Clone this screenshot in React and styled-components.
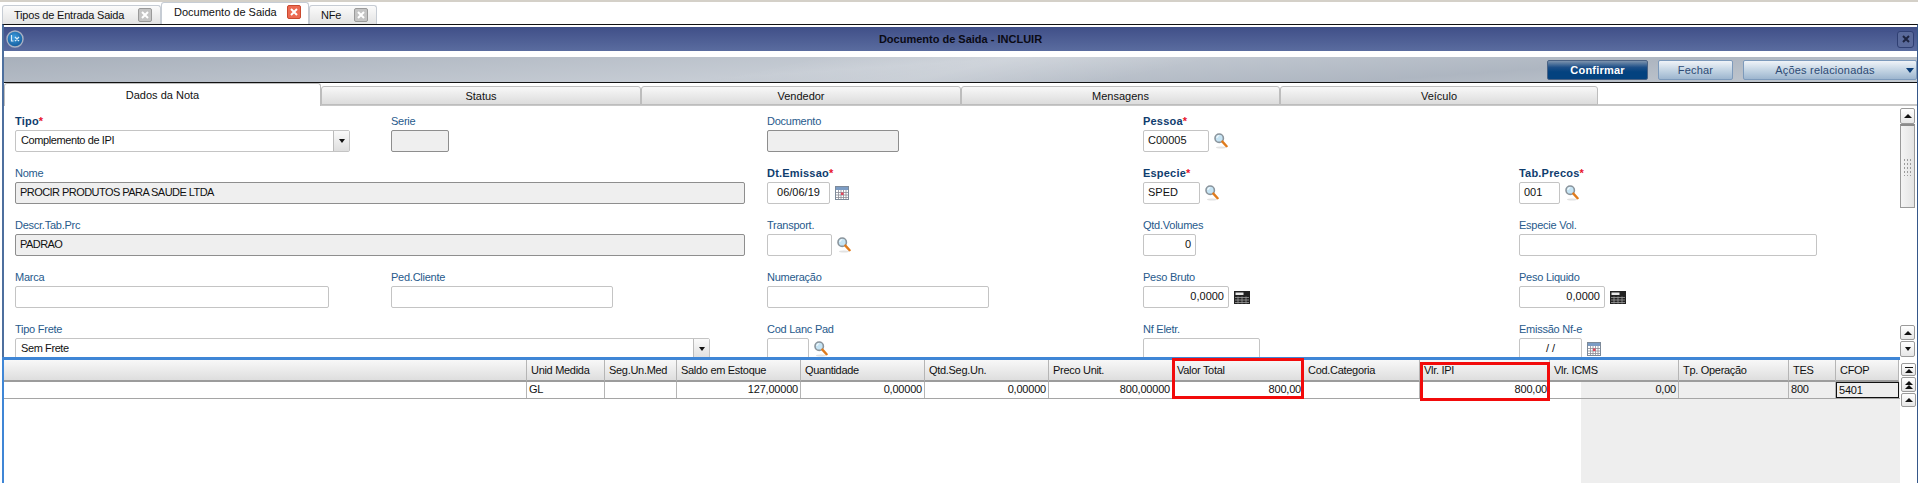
import React from 'react';
import styled, { createGlobalStyle } from 'styled-components';

const GlobalStyle = createGlobalStyle`
  html, body { margin: 0; padding: 0; background: #fff; }
  body { font-family: "Liberation Sans", Arial, sans-serif; font-size: 11px; color: #111; }
`;

const Page = styled.div`
  width: 1918px;
  height: 483px;
  overflow: hidden;
  position: relative;
  background: #fff;
`;

const TopEdge = styled.div`
  height: 2px;
  background: #d4d0c8;
`;

/* aba superior */
const DocTabs = styled.div`
  display: flex;
  align-items: flex-end;
  height: 22px;
  padding-left: 2px;
`;

const DocTab = styled.div`
  box-sizing: border-box;
  width: ${(p) => p.$w}px;
  height: ${(p) => (p.$active ? 22 : 19)}px;
  display: flex;
  align-items: center;
  justify-content: space-between;
  padding: ${(p) => (p.$active ? '0 7px 3px 12px' : '0 8px 0 11px')};
  font-size: 11px;
  letter-spacing: ${(p) => (p.$active ? '0' : '-0.2px')};
  color: #111;
  border: 1px solid #c6ccd4;
  border-bottom: none;
  border-radius: 3px 3px 0 0;
  background: ${(p) => (p.$active ? '#fff' : 'linear-gradient(#fbfbfb, #e3e3e3)')};
`;

const TabClose = styled.span`
  box-sizing: border-box;
  width: 14px;
  height: 14px;
  display: flex;
  align-items: center;
  justify-content: center;
  border: 1px solid ${(p) => (p.$active ? '#c9492f' : '#9a9a9a')};
  border-radius: 2px;
  background: ${(p) => (p.$active ? '#ec6a52' : '#c4c4c4')};
`;

const Window = styled.div`
  border-top: 1px solid #111;
  border-left: 2px solid #4d6f9e;
  margin-left: 2px;
  border-right: 1px solid #36588a;
`;

const TitleBar = styled.div`
  height: 24px;
  margin-top: 2px;
  display: flex;
  align-items: center;
  justify-content: space-between;
  padding: 0 3px 0 2px;
  background: linear-gradient(#404f88, #5a6c9f);
`;

const Logo = styled.span`
  width: 18px;
  height: 18px;
  display: block;
`;

const TitleText = styled.div`
  font-weight: bold;
  font-size: 11px;
  color: #0a0a14;
`;

const CloseButton = styled.span`
  box-sizing: border-box;
  width: 17px;
  height: 17px;
  display: flex;
  align-items: center;
  justify-content: center;
  border: 1px solid #2f3f72;
  border-radius: 3px;
  background: #5a6a9b;
`;

const Banner = styled.div`
  height: 25px;
  margin-top: 6px;
  border-bottom: 1px solid #111;
  display: flex;
  align-items: center;
  justify-content: flex-end;
  gap: 10px;
  background:
    linear-gradient(168deg, transparent 40%, rgba(255, 255, 255, 0.18) 50%, transparent 60%),
    linear-gradient(176deg, #a8b0bb 0%, #c6ccd4 45%, #aeb6c1 75%, #c5cbd2 100%);
`;

const ActionButton = styled.div`
  box-sizing: border-box;
  width: ${(p) => p.$w}px;
  height: 20px;
  padding-right: ${(p) => p.$pad || 0}px;
  position: relative;
  display: flex;
  align-items: center;
  justify-content: center;
  font-size: 11px;
  font-weight: ${(p) => (p.$primary ? 'bold' : 'normal')};
  letter-spacing: 0.2px;
  color: ${(p) => (p.$primary ? '#fff' : '#2d4a74')};
  border: 1px solid ${(p) => (p.$primary ? '#4a6284' : '#7d9abb')};
  border-radius: 2px;
  background: ${(p) =>
    p.$primary
      ? 'linear-gradient(#7d93ad 0%, #1d4f88 35%, #03427f 60%, #03427f 100%)'
      : 'linear-gradient(#f0f4f8 0%, #cddbe8 40%, #9db6cf 100%)'};
`;

const ActionArrow = styled.span`
  position: absolute;
  right: 2px;
  top: 7px;
  border-left: 4px solid transparent;
  border-right: 4px solid transparent;
  border-top: 5px solid #0d3f78;
`;

/* abas do formulario */
const FormTabs = styled.div`
  display: flex;
  align-items: flex-start;
  height: 23px;
  padding-left: 0;
  border-bottom: 2px solid #c8c8c8;
  box-sizing: border-box;
`;

const FormTab = styled.div`
  box-sizing: border-box;
  width: ${(p) => p.$w}px;
  height: ${(p) => (p.$active ? 23 : 19)}px;
  margin-top: ${(p) => (p.$active ? 0 : 3)}px;
  display: flex;
  align-items: center;
  justify-content: center;
  font-size: 11px;
  color: #111;
  border: 1px solid #bdbdbd;
  border-bottom: ${(p) => (p.$active ? 'none' : '1px solid #bdbdbd')};
  border-radius: 3px 3px 0 0;
  background: ${(p) => (p.$active ? '#fff' : 'linear-gradient(#f8f8f8, #dcdcdc)')};
  position: relative;
  z-index: ${(p) => (p.$active ? 1 : 0)};
`;

const FormArea = styled.div`
  height: 251px;
  display: flex;
  justify-content: space-between;
  overflow: hidden;
`;

const FormGrid = styled.div`
  display: grid;
  grid-template-columns: repeat(5, 376px);
  grid-auto-rows: 52px;
  padding: 9px 0 0 11px;
`;

const Field = styled.div`
  grid-column: span ${(p) => p.$span || 1};
  display: flex;
  flex-direction: column;
`;

const Label = styled.label`
  height: 15px;
  line-height: 13px;
  font-size: 11px;
  font-weight: ${(p) => (p.$required ? 'bold' : 'normal')};
  letter-spacing: ${(p) => (p.$required ? '0.2px' : '-0.25px')};
  color: ${(p) => (p.$required ? '#0f3d6e' : '#275a8c')};
`;

const Star = styled.span`
  color: #e8132c;
`;

const InputRow = styled.div`
  display: flex;
  align-items: center;
  gap: 5px;
  height: 22px;
`;

const Input = styled.div`
  box-sizing: border-box;
  width: ${(p) => p.$w}px;
  height: 22px;
  line-height: 18px;
  padding: 0 4px;
  font-size: 11px;
  letter-spacing: ${(p) => (p.$disabled ? '-0.55px' : '0')};
  color: #111;
  white-space: nowrap;
  overflow: hidden;
  text-align: ${(p) => p.$align || 'left'};
  border: 1px solid ${(p) => (p.$disabled ? '#8e8e8e' : '#c4c4c4')};
  border-radius: 2px;
  background: ${(p) => (p.$disabled ? '#efefef' : '#fff')};
`;

const Select = styled.div`
  box-sizing: border-box;
  width: ${(p) => p.$w}px;
  height: 22px;
  display: flex;
  justify-content: space-between;
  border: 1px solid #c4c4c4;
  border-radius: 2px;
  line-height: 19px;
  padding-left: 5px;
  font-size: 11px;
  letter-spacing: -0.4px;
`;

const SelectButton = styled.span`
  width: 15px;
  display: flex;
  align-items: center;
  justify-content: center;
  border-left: 1px solid #bbb;
  background: linear-gradient(#fafafa, #dedede);
`;

const TriDown = styled.span`
  border-left: 3.5px solid transparent;
  border-right: 3.5px solid transparent;
  border-top: 4px solid #111;
`;

const TriUp = styled.span`
  border-left: 4px solid transparent;
  border-right: 4px solid transparent;
  border-bottom: 4px solid #111;
`;

/* barra de rolagem */
const ScrollBar = styled.div`
  width: 16px;
  margin: 2px 1px 0 0;
  display: flex;
  flex-direction: column;
  flex-shrink: 0;
`;

const ScrollButton = styled.div`
  box-sizing: border-box;
  width: 15px;
  height: ${(p) => p.$h || 15}px;
  margin-bottom: ${(p) => p.$gap || 0}px;
  display: flex;
  flex-direction: column;
  align-items: center;
  justify-content: center;
  border: 1px solid #9a9a9a;
  border-radius: 2px;
  background: linear-gradient(#fff, #e6e6e6);
  flex-shrink: 0;
`;

const ScrollThumb = styled.div`
  box-sizing: border-box;
  width: 15px;
  height: 84px;
  display: flex;
  align-items: center;
  justify-content: center;
  border: 1px solid #9a9a9a;
  border-top: 2px solid #8b8b8b;
  background: linear-gradient(90deg, #f4f4f4, #e4e4e4);
`;

const ThumbGrip = styled.div`
  width: 10px;
  height: 18px;
  background-image: radial-gradient(#9c9c9c 0.6px, transparent 0.7px);
  background-size: 3px 4px;
`;

const ScrollTrack = styled.div`
  flex: 1;
  width: 15px;
  background-image: radial-gradient(#c9c9c9 0.5px, transparent 0.6px);
  background-size: 2px 2px;
`;

/* grid de itens */
const GridArea = styled.div`
  margin-left: -2px;
  height: 126px;
  display: flex;
  position: relative;
  border-left: 2px solid #3f86d6;
`;

const GridTable = styled.div`
  width: 1897px;
  display: flex;
  flex-direction: column;
  border-top: 3px solid #3f86d6;
`;

const columns = '523px 78px 72px 124px 124px 124px 124px 131px 116px 130px 129px 110px 47px 63px';

const GridHeader = styled.div`
  display: grid;
  grid-template-columns: ${columns};
  height: 22px;
`;

const HeadCell = styled.div`
  box-sizing: border-box;
  padding-left: 4px;
  line-height: 20px;
  font-size: 11px;
  letter-spacing: -0.3px;
  color: #111;
  white-space: nowrap;
  border-right: 1px solid #b5b5b5;
  border-bottom: 2px solid #9c9c9c;
  background: linear-gradient(#f8f8f8, #dedede);
`;

const GridBody = styled.div`
  flex: 1;
  background: linear-gradient(90deg, #fff 1577px, #eeeeee 1577px);
`;

const GridRow = styled.div`
  display: grid;
  grid-template-columns: ${columns};
  height: 17px;
  border-bottom: 1px solid #a5a5a5;
  box-sizing: border-box;
`;

const Cell = styled.div`
  box-sizing: border-box;
  padding: 0 2px;
  line-height: 15px;
  font-size: 11px;
  letter-spacing: -0.2px;
  color: #111;
  text-align: ${(p) => (p.$right ? 'right' : 'left')};
  border-right: 1px solid #b5b5b5;
  ${(p) => p.$selected && 'border: 1px solid #111; height: 16px;'}
`;

const Highlight = styled.div`
  position: absolute;
  box-sizing: border-box;
  left: ${(p) => p.$x}px;
  top: ${(p) => p.$y}px;
  width: ${(p) => p.$w}px;
  height: ${(p) => p.$h}px;
  border: 3px solid #f20b0b;
  pointer-events: none;
`;

const GridScroll = styled.div`
  width: 16px;
  padding: 6px 0 0 1px;
  display: flex;
  flex-direction: column;
  gap: 1px;
`;

const GridTriBar = styled.span`
  width: 8px;
  height: 1px;
  margin-bottom: 1px;
  background: #111;
`;

const SearchIcon = () => (
  <svg width="14" height="16" viewBox="0 0 14 16">
    <ellipse cx="7" cy="14.6" rx="5" ry="1" fill="#e2e2e2" />
    <circle cx="5.2" cy="5.2" r="4.2" fill="#c6e4f4" stroke="#8a949c" strokeWidth="1.6" />
    <path d="M2.8 5a2.6 2.6 0 0 1 2.4-2.4" fill="none" stroke="#fff" strokeWidth="1" />
    <path d="M8.4 8.6 12.6 13.2" stroke="#e07b1c" strokeWidth="2.4" strokeLinecap="round" />
  </svg>
);

const CalendarIcon = () => (
  <svg width="14" height="14" viewBox="0 0 14 14">
    <rect x="0.5" y="0.5" width="13" height="13" fill="#fff" stroke="#7d8a99" />
    <rect x="1" y="1" width="12" height="3" fill="#7c9cc4" />
    <path d="M1 6.5h12M1 9h12M1 11.5h12M3.5 4v9M6 4v9M8.5 4v9M11 4v9" stroke="#8c8c94" strokeWidth="0.8" />
    <rect x="6" y="6.5" width="2.5" height="2.5" fill="#e2455a" />
  </svg>
);

const CalcIcon = () => (
  <svg width="16" height="13" viewBox="0 0 16 13">
    <rect width="16" height="13" fill="#222" />
    <rect x="1.5" y="1.5" width="8" height="2.5" fill="#e8e8e8" />
    <path d="M1 6.5h14M1 9h14M1 11.5h14M4 5.5v7M8 5.5v7M12 5.5v7" stroke="#9a9a9a" strokeWidth="0.8" />
  </svg>
);

const XMark = ({ color, size = 8 }) => (
  <svg width={size} height={size} viewBox="0 0 8 8">
    <path d="M1 1 7 7M7 1 1 7" stroke={color} strokeWidth="2" />
  </svg>
);

const LogoIcon = () => (
  <svg width="18" height="18" viewBox="0 0 18 18">
    <defs>
      <radialGradient id="lg" cx="0.45" cy="0.4" r="0.7">
        <stop offset="0" stopColor="#3f9fe0" />
        <stop offset="1" stopColor="#0b4f8f" />
      </radialGradient>
    </defs>
    <circle cx="9" cy="9" r="8" fill="url(#lg)" stroke="#a9b2c4" strokeWidth="1.4" />
    <path d="M5.5 5v6h2M9 7l4 4M13 7l-4 4" stroke="#dcecf8" strokeWidth="1.2" fill="none" />
  </svg>
);

const fields = [
  { label: 'Tipo', required: true, select: 'Complemento de IPI', w: 335 },
  { label: 'Serie', w: 58, disabled: true },
  { label: 'Documento', w: 132, disabled: true },
  { label: 'Pessoa', required: true, w: 66, value: 'C00005', icon: 'search' },
  { skip: true },
  { label: 'Nome', span: 2, w: 730, disabled: true, value: 'PROCIR PRODUTOS PARA SAUDE LTDA' },
  { label: 'Dt.Emissao', required: true, w: 63, value: '06/06/19', align: 'center', icon: 'calendar' },
  { label: 'Especie', required: true, w: 57, value: 'SPED', icon: 'search' },
  { label: 'Tab.Precos', required: true, w: 41, value: '001', icon: 'search' },
  { label: 'Descr.Tab.Prc', span: 2, w: 730, disabled: true, value: 'PADRAO' },
  { label: 'Transport.', w: 65, icon: 'search' },
  { label: 'Qtd.Volumes', w: 53, value: '0', align: 'right' },
  { label: 'Especie Vol.', w: 298 },
  { label: 'Marca', w: 314 },
  { label: 'Ped.Cliente', w: 222 },
  { label: 'Numeração', w: 222 },
  { label: 'Peso Bruto', w: 86, value: '0,0000', align: 'right', icon: 'calc' },
  { label: 'Peso Liquido', w: 86, value: '0,0000', align: 'right', icon: 'calc' },
  { label: 'Tipo Frete', span: 2, select: 'Sem Frete', w: 695 },
  { label: 'Cod Lanc Pad', w: 42, icon: 'search' },
  { label: 'Nf Eletr.', w: 117 },
  { label: 'Emissão Nf-e', w: 63, value: '/ /', align: 'center', icon: 'calendar' },
];

const icons = { search: <SearchIcon />, calendar: <CalendarIcon />, calc: <CalcIcon /> };

const headers = [
  '', 'Unid Medida', 'Seg.Un.Med', 'Saldo em Estoque', 'Quantidade', 'Qtd.Seg.Un.', 'Preco Unit.',
  'Valor Total', 'Cod.Categoria', 'Vlr. IPI', 'Vlr. ICMS', 'Tp. Operação', 'TES', 'CFOP',
];

const row = [
  { v: '' }, { v: 'GL' }, { v: '' },
  { v: '127,00000', right: true }, { v: '0,00000', right: true }, { v: '0,00000', right: true },
  { v: '800,00000', right: true }, { v: '800,00', right: true }, { v: '' },
  { v: '800,00', right: true }, { v: '0,00', right: true }, { v: '' }, { v: '800' },
  { v: '5401', selected: true },
];

const App = () => (
  <Page>
    <GlobalStyle />
    <TopEdge />
    <DocTabs>
      <DocTab $w={159}>Tipos de Entrada Saida<TabClose><XMark color="#fff" /></TabClose></DocTab>
      <DocTab $w={148} $active>Documento de Saida<TabClose $active><XMark color="#fff" /></TabClose></DocTab>
      <DocTab $w={68}>NFe<TabClose><XMark color="#fff" /></TabClose></DocTab>
    </DocTabs>
    <Window>
      <TitleBar>
        <Logo><LogoIcon /></Logo>
        <TitleText>Documento de Saida - INCLUIR</TitleText>
        <CloseButton><XMark color="#1d2440" /></CloseButton>
      </TitleBar>
      <Banner>
        <ActionButton $w={101} $primary>Confirmar</ActionButton>
        <ActionButton $w={75}>Fechar</ActionButton>
        <ActionButton $w={174} $pad={10}>Ações relacionadas<ActionArrow /></ActionButton>
      </Banner>
      <FormTabs>
        <FormTab $w={317} $active>Dados da Nota</FormTab>
        <FormTab $w={320}>Status</FormTab>
        <FormTab $w={320}>Vendedor</FormTab>
        <FormTab $w={319}>Mensagens</FormTab>
        <FormTab $w={318}>Veículo</FormTab>
      </FormTabs>
      <FormArea>
        <FormGrid>
          {fields.map((f, i) =>
            f.skip ? (
              <div key={i} />
            ) : (
              <Field key={i} $span={f.span}>
                <Label $required={f.required}>
                  {f.label}
                  {f.required && <Star>*</Star>}
                </Label>
                <InputRow>
                  {f.select ? (
                    <Select $w={f.w}>
                      {f.select}
                      <SelectButton><TriDown /></SelectButton>
                    </Select>
                  ) : (
                    <Input $w={f.w} $disabled={f.disabled} $align={f.align}>{f.value}</Input>
                  )}
                  {f.icon && icons[f.icon]}
                </InputRow>
              </Field>
            ),
          )}
        </FormGrid>
        <ScrollBar>
          <ScrollButton $h={16}><TriUp /></ScrollButton>
          <ScrollThumb><ThumbGrip /></ScrollThumb>
          <ScrollTrack />
          <ScrollButton $h={15} $gap={1}><TriUp /></ScrollButton>
          <ScrollButton $h={16}><TriDown /></ScrollButton>
        </ScrollBar>
      </FormArea>
      <GridArea>
        <GridTable>
          <GridHeader>
            {headers.map((h, i) => <HeadCell key={i}>{h}</HeadCell>)}
          </GridHeader>
          <GridBody>
            <GridRow>
              {row.map((c, i) => (
                <Cell key={i} $right={c.right} $selected={c.selected}>{c.v}</Cell>
              ))}
            </GridRow>
          </GridBody>
        </GridTable>
        <GridScroll>
          <ScrollButton $h={13}><GridTriBar /><TriUp /></ScrollButton>
          <ScrollButton $h={15}><TriUp /><TriUp /></ScrollButton>
          <ScrollButton $h={14}><TriUp /></ScrollButton>
        </GridScroll>
        <Highlight $x={1168} $y={1} $w={132} $h={41} />
        <Highlight $x={1416} $y={5} $w={130} $h={39} />
      </GridArea>
    </Window>
  </Page>
);

export default App;
